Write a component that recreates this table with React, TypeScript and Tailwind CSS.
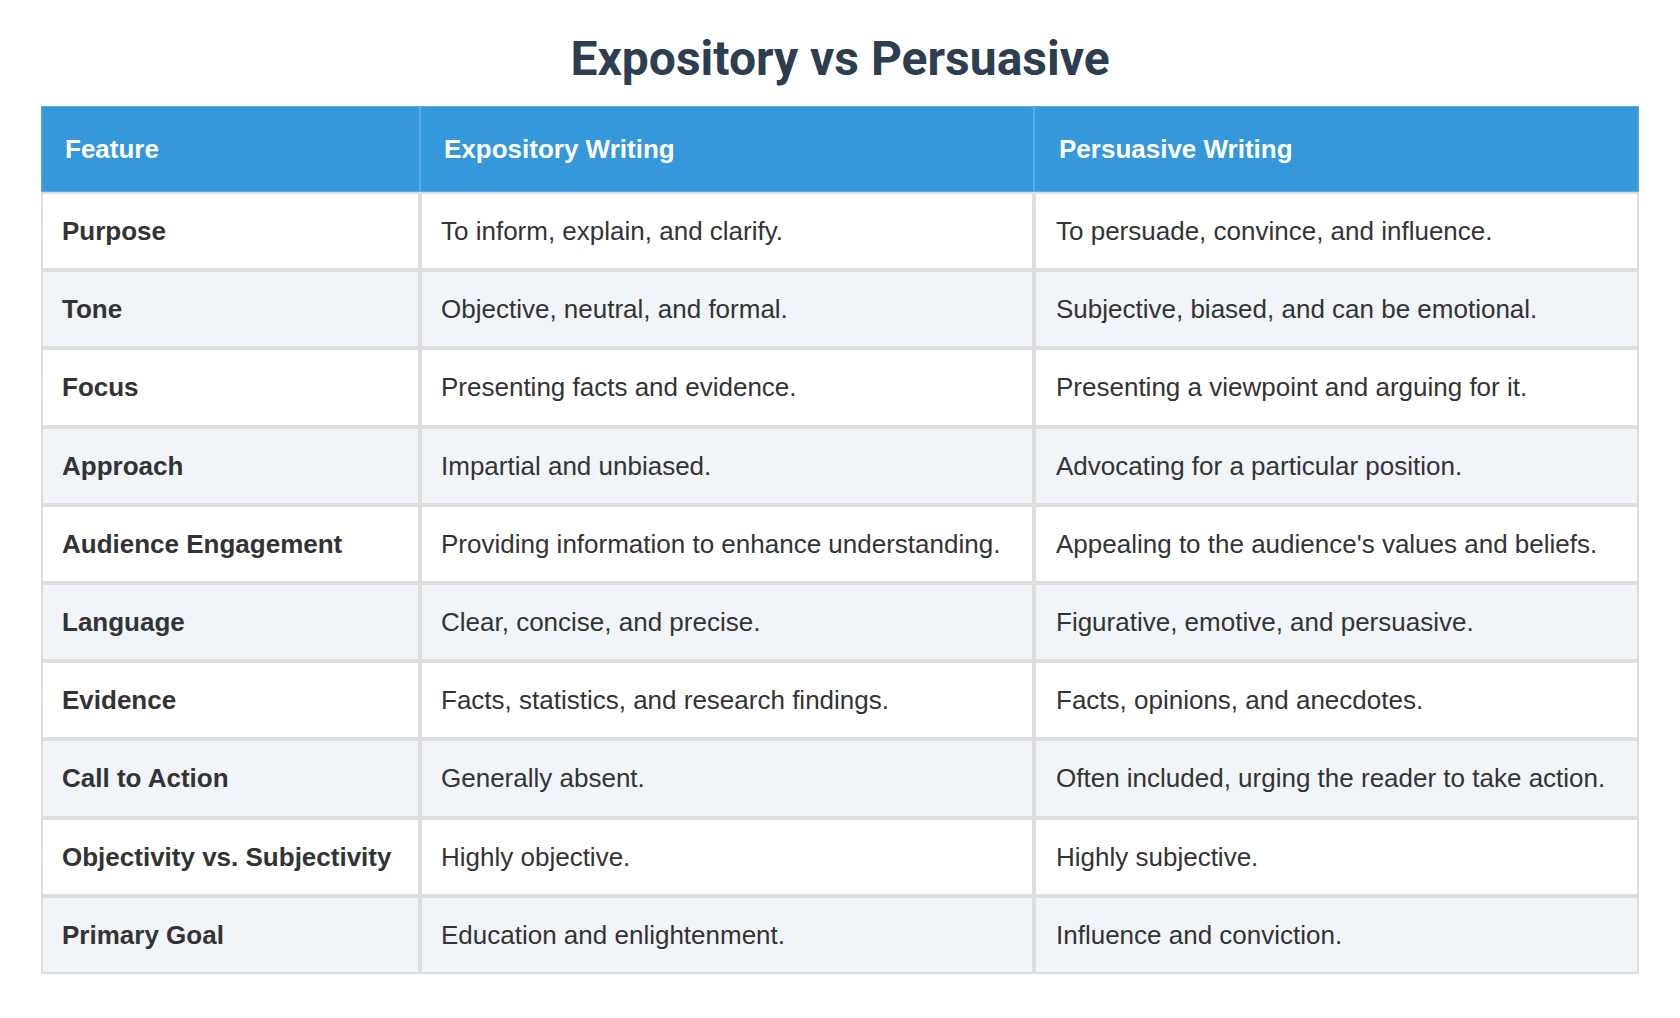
import React from 'react'

const rows = [
  { feature: 'Purpose', expository: 'To inform, explain, and clarify.', persuasive: 'To persuade, convince, and influence.' },
  { feature: 'Tone', expository: 'Objective, neutral, and formal.', persuasive: 'Subjective, biased, and can be emotional.' },
  { feature: 'Focus', expository: 'Presenting facts and evidence.', persuasive: 'Presenting a viewpoint and arguing for it.' },
  { feature: 'Approach', expository: 'Impartial and unbiased.', persuasive: 'Advocating for a particular position.' },
  {
    feature: 'Audience Engagement',
    expository: 'Providing information to enhance understanding.',
    persuasive: "Appealing to the audience's values and beliefs.",
  },
  { feature: 'Language', expository: 'Clear, concise, and precise.', persuasive: 'Figurative, emotive, and persuasive.' },
  { feature: 'Evidence', expository: 'Facts, statistics, and research findings.', persuasive: 'Facts, opinions, and anecdotes.' },
  { feature: 'Call to Action', expository: 'Generally absent.', persuasive: 'Often included, urging the reader to take action.' },
  { feature: 'Objectivity vs. Subjectivity', expository: 'Highly objective.', persuasive: 'Highly subjective.' },
  { feature: 'Primary Goal', expository: 'Education and enlightenment.', persuasive: 'Influence and conviction.' },
]

const App = () => {
  return (
    <div className="min-h-screen bg-white px-[41px] pt-[30px] font-['Liberation_Sans',Arial,sans-serif]">
      <h1 className="mb-[18px] text-center font-['Roboto',sans-serif] text-[48px] font-bold leading-[58px] text-[#2c3e50]">
        Expository vs Persuasive
      </h1>

      <table className="w-full table-fixed border-separate border-spacing-0 text-[26px] text-[#333]">
        <colgroup>
          <col className="w-[379px]" />
          <col className="w-[614px]" />
          <col />
        </colgroup>
        <thead>
          <tr className="bg-[#3498db]">
            <th className="border border-[#5aabe2] px-[23px] py-[27px] text-left text-[26px] font-bold leading-[30px] text-white">
              Feature
            </th>
            <th className="border border-[#5aabe2] px-[23px] py-[27px] text-left text-[26px] font-bold leading-[30px] text-white">
              Expository Writing
            </th>
            <th className="border border-[#5aabe2] pr-[23px] pl-[24px] py-[27px] text-left text-[26px] font-bold leading-[30px] text-white">
              Persuasive Writing
            </th>
          </tr>
        </thead>
        <tbody>
          {rows.map((row, i) => (
            <tr key={row.feature} className={i % 2 === 0 ? 'bg-white' : 'bg-[#f1f4f9]'}>
              <td className="border-2 border-[#dedede] pr-[18px] pl-[19px] py-[22px] font-bold leading-[30.2px]">
                {row.feature}
              </td>
              <td className="border-2 border-[#dedede] pr-[18px] pl-[19px] py-[22px] leading-[30.2px]">{row.expository}</td>
              <td className="border-2 border-[#dedede] pr-[18px] pl-[20px] py-[22px] leading-[30.2px]">{row.persuasive}</td>
            </tr>
          ))}
        </tbody>
      </table>
    </div>
  )
}

export default App
